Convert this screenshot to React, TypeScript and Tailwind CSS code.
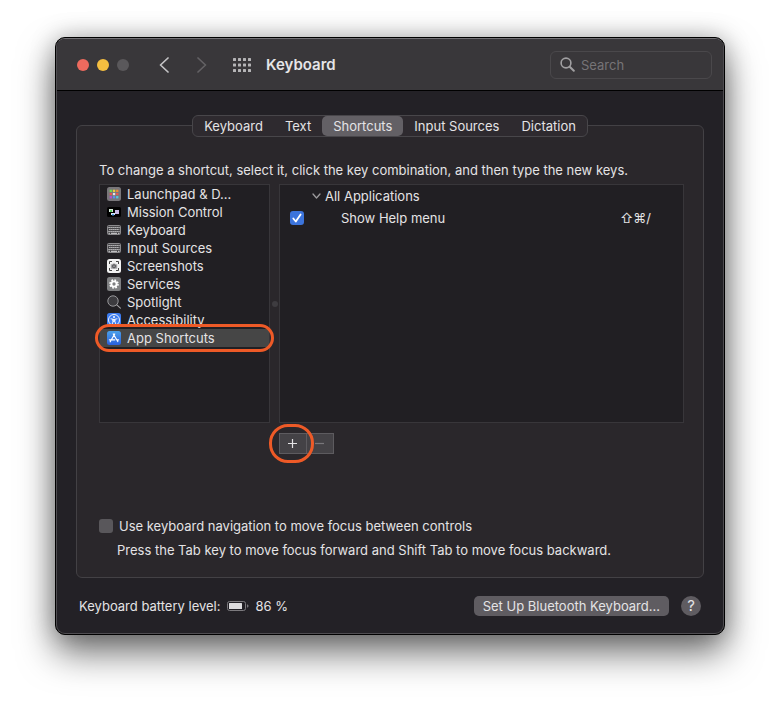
import type { ReactNode } from "react";

const IconFrame = ({ children }: { children: ReactNode }) => (
  <svg width="14" height="14" viewBox="0 0 14 14" className="shrink-0">
    {children}
  </svg>
);

const LaunchpadIcon = () => (
  <IconFrame>
    <rect width="14" height="14" rx="2.5" fill="#78767a" />
    {[
      ["#6fd94f", "#e9cf3d", "#ee8b34"],
      ["#e8574b", "#e4e4e6", "#e9574f"],
      ["#b252cf", "#5b8df0", "#4fc9dd"],
    ].map((row, y) =>
      row.map((fill, x) => (
        <rect key={`${x}${y}`} x={2.7 + x * 3.2} y={2.7 + y * 3.2} width="2.3" height="2.3" fill={fill} />
      ))
    )}
  </IconFrame>
);

const MissionControlIcon = () => (
  <IconFrame>
    <rect y="2" width="14" height="10" rx="1.5" fill="#000" />
    <rect x="2" y="4" width="4" height="3" fill="#d6e8d8" />
    <rect x="3" y="5" width="2" height="2" fill="#5fce63" />
    <rect x="8" y="5" width="4" height="4" fill="#c7b9e6" />
    <rect x="4" y="8" width="4" height="2" fill="#d6e6f3" />
    <rect x="5" y="9" width="2" height="1.5" fill="#4c9be8" />
  </IconFrame>
);

const KeyboardIcon = () => (
  <IconFrame>
    <rect x="0.5" y="2.5" width="13" height="9" rx="1" fill="#4a494c" stroke="#8b8a8d" />
    <g stroke="#dcdcde" fill="none">
      <path d="M1.5 4.5h11" strokeDasharray="1.2 .8" />
      <path d="M2.3 6.5h10.2" strokeDasharray="1.2 .8" />
      <path d="M1.5 8.5h11" strokeDasharray="1.2 .8" />
      <path d="M1.5 10.3h1.4M4 10.3h6M11 10.3h1.5" />
    </g>
  </IconFrame>
);

const ScreenshotsIcon = () => (
  <IconFrame>
    <rect width="14" height="14" rx="2.5" fill="#f2f2f2" />
    <path d="M2.5 5V2.5H5M9 2.5h2.5V5M11.5 9v2.5H9M5 11.5H2.5V9" fill="none" stroke="#444" />
    <path d="M3.8 5.2h1.5l.6-.8h2.2l.6.8h1.5v4.6H3.8z" fill="#a3a3a5" />
    <circle cx="7" cy="7.3" r="1.6" fill="#8b8b8e" stroke="#444446" strokeWidth="0.8" />
  </IconFrame>
);

const ServicesIcon = () => (
  <IconFrame>
    <rect width="14" height="14" rx="2.5" fill="#7f8082" />
    <circle cx="7" cy="7" r="4" fill="none" stroke="#fff" strokeWidth="1.6" strokeDasharray="1.7 1.44" />
    <circle cx="7" cy="7" r="2.6" fill="none" stroke="#fff" strokeWidth="1.9" />
  </IconFrame>
);

const SpotlightIcon = () => (
  <IconFrame>
    <circle cx="6" cy="6" r="5.2" fill="#3c3b3f" stroke="#a3a2a5" strokeWidth="0.9" />
    <path d="M9.8 9.8l3.6 3.4" stroke="#a3a2a5" strokeWidth="1.1" strokeLinecap="round" />
  </IconFrame>
);

const AccessibilityIcon = () => (
  <IconFrame>
    <rect width="14" height="14" rx="2.5" fill="#3c7cf0" />
    <circle cx="7" cy="7" r="5.5" fill="none" stroke="#fff" strokeWidth="0.9" />
    <circle cx="7" cy="3.9" r="1" fill="#fff" />
    <path d="M4 5.8l2.2.5v2L5.2 11M10 5.8l-2.200.5v2l1 2.700M6.200 6.400h1.600v1.900H6.200z" fill="none" stroke="#fff" strokeWidth="0.9" strokeLinecap="round" />
  </IconFrame>
);

const AppStoreIcon = () => (
  <IconFrame>
    <defs>
      <linearGradient id="store" x1="0" y1="0" x2="0" y2="1">
        <stop offset="0" stopColor="#4aa0ea" />
        <stop offset="1" stopColor="#2b60dc" />
      </linearGradient>
    </defs>
    <rect width="14" height="14" rx="2.5" fill="url(#store)" />
    <path d="M7.7 3L4.2 9M6.3 3l.7 1.2 3.8 6.3M2.4 8.8h5.4M9.8 8.8h1.8M3.6 10.1l-.4.7" fill="none" stroke="#fff" strokeWidth="1.2" strokeLinecap="round" />
  </IconFrame>
);

const categories = [
  { name: "Launchpad & D...", icon: <LaunchpadIcon /> },
  { name: "Mission Control", icon: <MissionControlIcon /> },
  { name: "Keyboard", icon: <KeyboardIcon /> },
  { name: "Input Sources", icon: <KeyboardIcon /> },
  { name: "Screenshots", icon: <ScreenshotsIcon /> },
  { name: "Services", icon: <ServicesIcon /> },
  { name: "Spotlight", icon: <SpotlightIcon /> },
  { name: "Accessibility", icon: <AccessibilityIcon /> },
  { name: "App Shortcuts", icon: <AppStoreIcon />, selected: true },
];

const tabs = ["Keyboard", "Text", "Shortcuts", "Input Sources", "Dictation"];

const TitleBar = () => (
  <header className="flex h-[52px] items-center border-b border-black bg-[#39373a] pl-5 pr-[11px]">
    <div className="flex gap-2">
      <button aria-label="Close" className="size-3 rounded-full bg-[#ed6a5e]" />
      <button aria-label="Minimize" className="size-3 rounded-full bg-[#f5bf40]" />
      <button aria-label="Zoom" className="size-3 rounded-full bg-[#5a585b]" />
    </div>
    <button aria-label="Back" className="ml-[30px]">
      <svg width="10" height="16" viewBox="0 0 10 16" fill="none" stroke="#c4c3c5" strokeWidth="1.7" strokeLinecap="round" strokeLinejoin="round">
        <path d="M9 1L1.5 8 9 15" />
      </svg>
    </button>
    <button aria-label="Forward" className="ml-7">
      <svg width="10" height="16" viewBox="0 0 10 16" fill="none" stroke="#636164" strokeWidth="1.7" strokeLinecap="round" strokeLinejoin="round">
        <path d="M1 1l7.5 7L1 15" />
      </svg>
    </button>
    <button aria-label="Show all" className="ml-[26px]">
      <svg width="18" height="14" viewBox="0 0 18 14" fill="#b5b4b6">
        {[0, 5.5, 11].map((y) =>
          [0, 5, 10, 15].map((x) => <rect key={`${x}-${y}`} x={x} y={y} width="3" height="3" rx="0.6" />)
        )}
      </svg>
    </button>
    <h1 className="ml-[15px] text-[15px] font-semibold text-[#e6e5e7]">Keyboard</h1>
    <label className="ml-auto flex h-7 w-[162px] items-center gap-[6px] rounded-md border border-[#4a484b] px-[9px]">
      <svg width="15" height="15" viewBox="0 0 15 15" className="shrink-0" fill="none" stroke="#a09fa1" strokeWidth="1.6" strokeLinecap="round">
        <circle cx="6" cy="6" r="4.9" />
        <path d="M9.7 9.7l4.1 4.1" strokeWidth="2" />
      </svg>
      <input
        type="search"
        aria-label="Search"
        placeholder="Search"
        className="w-full min-w-0 bg-transparent outline-none placeholder:text-[#767477]"
      />
    </label>
  </header>
);

const TabBar = () => (
  <nav className="relative z-10 -mb-3 flex h-[22px] self-center rounded-md border border-[#48464a] bg-[#2e2a2f]">
    {tabs.map((tab) =>
      tab === "Shortcuts" ? (
        <button key={tab} className="rounded-[5px] bg-[#636065] px-[11px]">
          {tab}
        </button>
      ) : (
        <button key={tab} className="px-[11px]">
          {tab}
        </button>
      )
    )}
  </nav>
);

const CategoryList = () => (
  <ul className="w-[171px] shrink-0 border border-[#38363a] bg-[#211f23]">
    {categories.map(({ name, icon, selected }) => (
      <li key={name} className="relative">
        <button className={`flex h-[18px] w-full items-center gap-[6px] pl-[7px] ${selected ? "bg-[#464646]" : ""}`}>
          {icon}
          {name}
        </button>
        {selected && (
          <span className="pointer-events-none absolute -inset-x-[5px] -inset-y-[5px] rounded-full border-3 border-[#ee5a27]" />
        )}
      </li>
    ))}
  </ul>
);

const ShortcutList = () => (
  <div className="min-w-0 flex-1 border border-[#38363a] bg-[#211f23]">
    <button className="flex h-[22px] items-center gap-1 pl-8">
      <svg width="9" height="6" viewBox="0 0 9 6" fill="none" stroke="#9b9a9c" strokeWidth="1.3" strokeLinecap="round" strokeLinejoin="round">
        <path d="M1 1l3.5 4L8 1" />
      </svg>
      All Applications
    </button>
    <label className="flex h-[22px] items-center pl-[10px] pr-8">
      <span className="grid size-[14px] place-items-center">
        <input type="checkbox" defaultChecked className="col-start-1 row-start-1 size-[14px] appearance-none rounded-[3px] bg-[#3c74dc]" />
        <svg width="14" height="14" viewBox="0 0 14 14" className="pointer-events-none col-start-1 row-start-1" fill="none" stroke="#fff" strokeWidth="1.8" strokeLinecap="round" strokeLinejoin="round">
          <path d="M3.3 7.5l2.5 3L10.6 3.4" />
        </svg>
      </span>
      <span className="ml-[37px] flex-1">Show Help menu</span>
      <kbd className="font-['Inter','DejaVu_Sans',sans-serif]">⇧⌘/</kbd>
    </label>
  </div>
);

const AddRemove = () => (
  <div className="ml-[180px] mt-[10px] flex">
    <div className="relative">
      <button aria-label="Add" className="flex h-[21px] w-7 items-center justify-center border border-[#5d5b5f] bg-[#444246]">
        <svg width="10" height="11" viewBox="0 0 10 11" stroke="#e4e3e5" strokeWidth="1.2">
          <path d="M4.5 1v9M0 5.5h9" />
        </svg>
      </button>
      <span className="pointer-events-none absolute -left-[10px] -right-[7px] -top-[9px] -bottom-[9px] rounded-[19px] border-3 border-[#ee5a27]" />
    </div>
    <button aria-label="Remove" className="flex h-[21px] w-[27px] items-center justify-center border border-l-0 border-[#5d5b5f] bg-[#444246]">
      <svg width="10" height="11" viewBox="0 0 10 11" stroke="#79777b" strokeWidth="1.2">
        <path d="M0 5.5h9" />
      </svg>
    </button>
  </div>
);

const Footer = () => (
  <footer className="mt-[18px] flex h-5 items-center px-[3px]">
    <span>Keyboard battery level:</span>
    <svg width="22" height="10" viewBox="0 0 22 10" className="ml-[7px] mr-[6px]">
      <rect x="0.5" y="0.5" width="18" height="9" rx="2" fill="none" stroke="#7c7a7e" />
      <rect x="2" y="2" width="13" height="6" rx="0.5" fill="#dddcde" />
      <path d="M20 3v4l1.8-2z" fill="#7c7a7e" />
    </svg>
    <span>86 %</span>
    <button className="ml-auto h-5 rounded-[5px] bg-[#5f5c61] px-[9px]">Set Up Bluetooth Keyboard...</button>
    <button aria-label="Help" className="ml-3 size-5 rounded-full bg-[#5f5c61] text-[15px]">
      ?
    </button>
  </footer>
);

export default function App() {
  return (
    <div className="min-h-screen bg-white px-[55px] pb-[73px] pt-[37px] font-['Inter',sans-serif] text-[13px] leading-[18px] text-[#e4e3e5]">
      <main className="rounded-[10px] border border-black bg-black shadow-[0_18px_36px_rgba(0,0,0,0.55),0_0_24px_rgba(0,0,0,0.25)]">
        <div className="overflow-hidden rounded-[9px] border border-[#4f4d51] border-t-[#737175] bg-[#232126]">
          <TitleBar />
          <div className="flex flex-col px-[19px] pb-[17px] pt-6">
            <TabBar />
            <section className="rounded-md border border-[#434145] bg-[#2a272b] pb-[18px] pl-[22px] pr-[19px] pt-[35px]">
              <p className="mb-[5px] whitespace-nowrap">
                To change a shortcut, select it, click the key combination, and then type the new keys.
              </p>
              <div className="flex min-h-[239px]">
                <CategoryList />
                <div className="flex w-[9px] items-center justify-center">
                  <span className="size-[6px] rounded-full bg-[#3e3c40]" />
                </div>
                <ShortcutList />
              </div>
              <AddRemove />
              <label className="mt-[63px] flex items-center gap-[6px]">
                <input type="checkbox" className="size-[14px] appearance-none rounded-[3px] bg-[#59575b]" />
                Use keyboard navigation to move focus between controls
              </label>
              <p className="ml-[18px] mt-[6px] whitespace-nowrap">
                Press the Tab key to move focus forward and Shift Tab to move focus backward.
              </p>
            </section>
            <Footer />
          </div>
        </div>
      </main>
    </div>
  );
}
